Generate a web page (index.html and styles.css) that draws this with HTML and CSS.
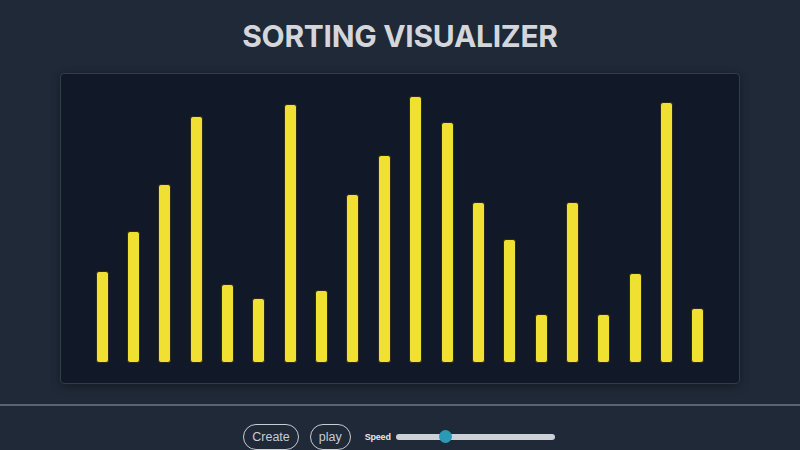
FILE: index.html
```html
<!DOCTYPE html>
<html>
<head>
<meta charset="utf-8">
<link rel="stylesheet" href="styles.css">
</head>
<body>
<header class="header">
  <h1 class="title">SORTING VISUALIZER</h1>
</header>
<main class="stage">
  <div class="panel">
    <div class="bar" style="height:92px"></div>
    <div class="bar" style="height:132px"></div>
    <div class="bar" style="height:179px"></div>
    <div class="bar" style="height:247px"></div>
    <div class="bar" style="height:79px"></div>
    <div class="bar" style="height:65px"></div>
    <div class="bar" style="height:259px"></div>
    <div class="bar" style="height:73px"></div>
    <div class="bar" style="height:169px"></div>
    <div class="bar" style="height:208px"></div>
    <div class="bar" style="height:267px"></div>
    <div class="bar" style="height:241px"></div>
    <div class="bar" style="height:161px"></div>
    <div class="bar" style="height:124px"></div>
    <div class="bar" style="height:49px"></div>
    <div class="bar" style="height:161px"></div>
    <div class="bar" style="height:49px"></div>
    <div class="bar" style="height:90px"></div>
    <div class="bar" style="height:261px"></div>
    <div class="bar" style="height:55px"></div>
  </div>
</main>
<footer class="controls">
  <button class="btn">Create</button>
  <button class="btn btn-play">play</button>
  <label class="speed">Speed</label>
  <div class="slider"><div class="thumb"></div></div>
</footer>
</body>
</html>
```
FILE: styles.css
```css
html, body {
  margin: 0;
  padding: 0;
  background: #1f2937;
  height: 450px;
  overflow: hidden;
  font-family: "Liberation Sans", Arial, sans-serif;
}
.header {
  display: flex;
  justify-content: center;
  padding-top: 18px;
  height: 54px;
  box-sizing: border-box;
}
.title {
  margin: 0;
  font-family: Inter, "Liberation Sans", sans-serif;
  font-weight: 700;
  font-size: 30px;
  line-height: 36px;
  letter-spacing: -0.3px;
  color: #d4d6db;
}
.stage {
  display: flex;
  justify-content: center;
  padding-top: 19px;
  padding-bottom: 20px;
  border-bottom: 2px solid #5b6270;
}
.panel {
  width: 680px;
  height: 311px;
  box-sizing: border-box;
  background: #111827;
  border: 1px solid #333c4a;
  border-radius: 4px;
  box-shadow: 0 2px 8px rgba(0,0,0,0.35);
  display: flex;
  align-items: flex-end;
  justify-content: center;
  gap: 18.37px;
  padding-bottom: 20px;
}
.bar {
  width: 13px;
  box-sizing: border-box;
  background: #f0e032;
  border: 1px solid #2a2a1a;
  border-radius: 3px;
}
.controls {
  display: flex;
  align-items: center;
  justify-content: center;
  padding-top: 18px;
  padding-right: 2px;
}
.btn {
  height: 26px;
  padding: 0 8px;
  border: 1.5px solid #c9ccd2;
  border-radius: 13px;
  background: transparent;
  color: #c9ccd2;
  font-family: "Liberation Sans", Arial, sans-serif;
  font-size: 12.5px;
  margin-right: 11px;
}
.btn-play {
  margin-right: 14px;
}
.speed {
  color: #e5e7eb;
  font-size: 9px;
  font-weight: 700;
  margin-right: 5px;
  letter-spacing: -0.2px;
}
.slider {
  position: relative;
  width: 159px;
  height: 6px;
  border-radius: 3px;
  background: #cdd0d6;
}
.thumb {
  position: absolute;
  left: 43px;
  top: -4px;
  width: 13px;
  height: 13px;
  border-radius: 50%;
  background: #2a9ab5;
}
```
